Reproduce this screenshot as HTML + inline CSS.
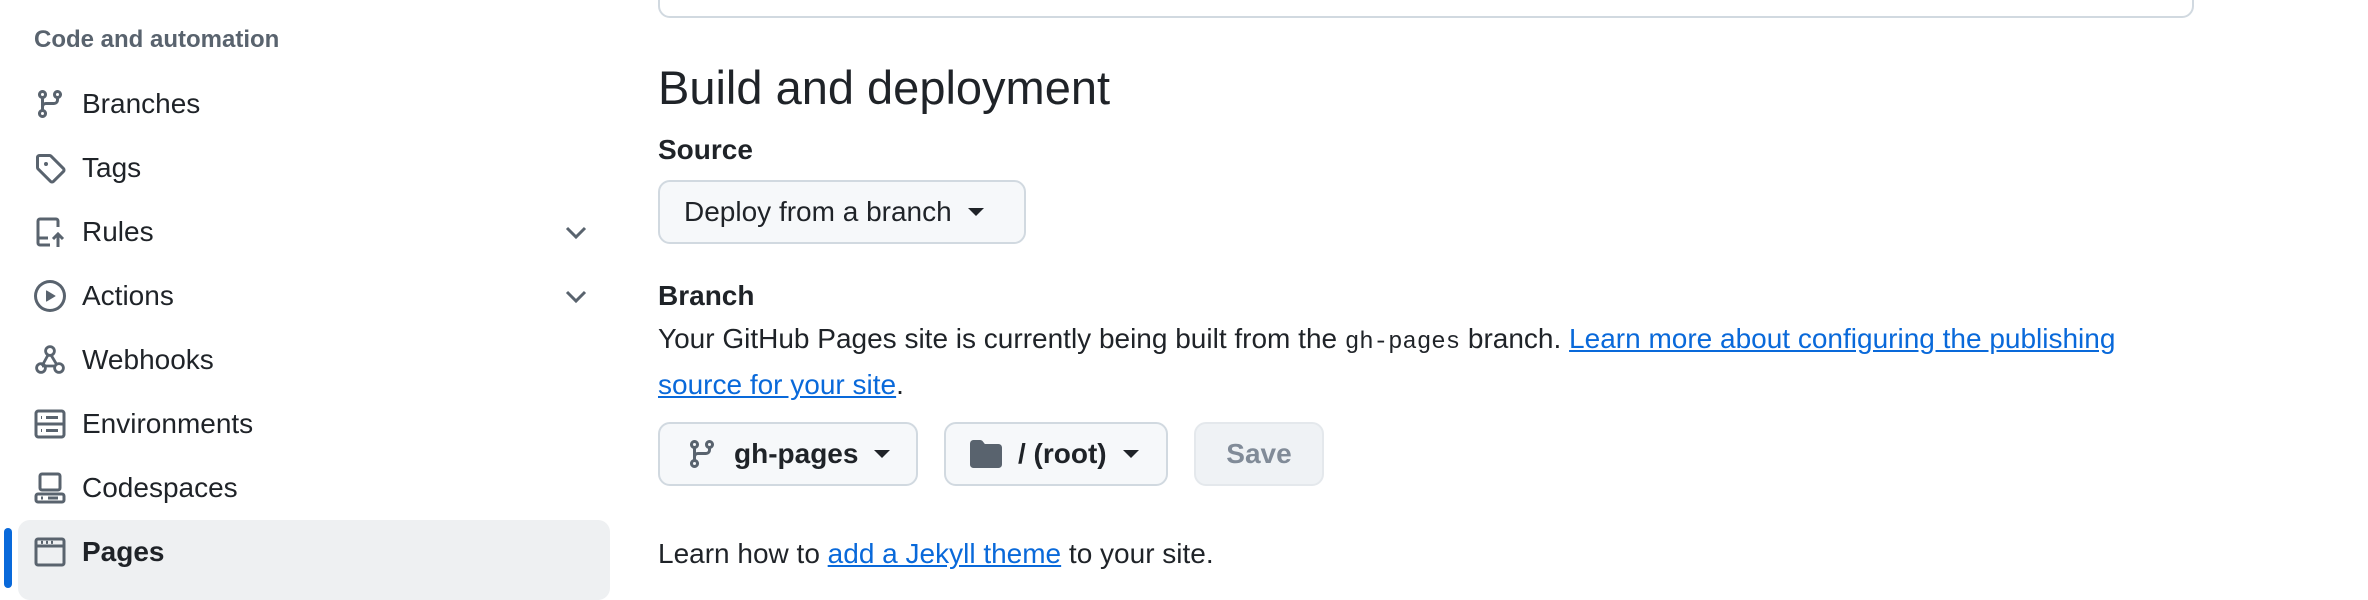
<!DOCTYPE html>
<html><head><meta charset="utf-8"><style>
html,body{margin:0;padding:0;background:#fff;}
body{width:2368px;height:578px;overflow:hidden;}
#w{zoom:2;width:1184px;height:289px;position:relative;font-family:"Liberation Sans",sans-serif;color:#1f2328;font-size:14px;}
.a{position:absolute;}
.h{left:17px;top:13px;font-size:12px;font-weight:bold;color:#59636e;}
.it{left:17px;height:20px;display:flex;align-items:center;white-space:nowrap;}
.it svg{width:16px;height:16px;fill:#59636e;margin-right:8px;}
.chev{left:280px;width:16px;height:16px;}
.btn{position:absolute;height:30px;border:1px solid #d1d9e0;border-radius:6px;background:#f6f8fa;display:flex;align-items:center;font-weight:bold;box-sizing:content-box;}
.car{width:0;height:0;border-left:4px solid transparent;border-right:4px solid transparent;border-top:4px solid #1f2328;margin-left:8px;}
a{color:#0969da;text-decoration:underline;}
code{font-family:"Liberation Mono",monospace;font-size:12px;}
</style></head><body><div id="w">
<div class="a h">Code and automation</div>

<div class="a it" style="top:42px"><svg viewBox="0 0 16 16"><path d="M9.5 3.25a2.25 2.25 0 1 1 3 2.122V6A2.5 2.5 0 0 1 10 8.5H6a1 1 0 0 0-1 1v1.128a2.251 2.251 0 1 1-1.5 0V5.372a2.25 2.25 0 1 1 1.5 0v1.836A2.493 2.493 0 0 1 6 7h4a1 1 0 0 0 1-1v-.628A2.25 2.25 0 0 1 9.5 3.25Zm-6 0a.75.75 0 1 0 1.5 0 .75.75 0 0 0-1.5 0Zm8.25-.75a.75.75 0 1 0 0 1.5.75.75 0 0 0 0-1.5ZM4.25 12a.75.75 0 1 0 0 1.5.75.75 0 0 0 0-1.5Z"/></svg>Branches</div>
<div class="a it" style="top:74px"><svg viewBox="0 0 16 16"><path d="M1 7.775V2.75C1 1.784 1.784 1 2.750 1h5.025c.464 0 .91.184 1.238.513l6.25 6.25a1.75 1.75 0 0 1 0 2.474l-5.026 5.026a1.75 1.75 0 0 1-2.474 0l-6.25-6.25A1.752 1.752 0 0 1 1 7.775Zm1.5 0c0 .066.026.13.073.177l6.25 6.25a.25.25 0 0 0 .354 0l5.025-5.025a.25.25 0 0 0 0-.354l-6.25-6.25a.25.25 0 0 0-.177-.073H2.75a.25.25 0 0 0-.25.25ZM6 5a1 1 0 1 1 0 2 1 1 0 0 1 0-2Z"/></svg>Tags</div>
<div class="a it" style="top:106px"><svg viewBox="0 0 16 16" style="fill:none;stroke:#59636e;stroke-width:1.5"><path d="M8 14.5H3a1 1 0 0 1-1-1v-11a1 1 0 0 1 1-1h8a1 1 0 0 1 1 1v3M2 11h5M12 15.5V9m-2.5 2.5L12 9l2.5 2.5"/></svg>Rules</div>
<svg class="a chev" style="top:108px" viewBox="0 0 16 16"><path d="M3.5 6l4.5 4.5L12.5 6" fill="none" stroke="#59636e" stroke-width="1.5"/></svg>
<div class="a it" style="top:138px"><svg viewBox="0 0 16 16"><path d="M8 0a8 8 0 1 1 0 16A8 8 0 0 1 8 0ZM1.5 8a6.5 6.5 0 1 0 13 0 6.5 6.5 0 0 0-13 0Zm4.879-2.773 4.264 2.559a.25.25 0 0 1 0 .428l-4.264 2.559A.25.25 0 0 1 6 10.559V5.442a.25.25 0 0 1 .379-.215Z"/></svg>Actions</div>
<svg class="a chev" style="top:140px" viewBox="0 0 16 16"><path d="M3.5 6l4.5 4.5L12.5 6" fill="none" stroke="#59636e" stroke-width="1.5"/></svg>
<div class="a it" style="top:170px"><svg viewBox="0 0 16 16" style="fill:none;stroke:#59636e;stroke-width:1.4"><circle cx="8" cy="3.5" r="2.2"/><path d="M7 5.5 4 11M4 11H11M8.5 5.5l3 5"/><circle cx="3.5" cy="12" r="2.2"/><circle cx="12.5" cy="12" r="2.2"/></svg>Webhooks</div>
<div class="a it" style="top:202px"><svg viewBox="0 0 16 16" style="fill:none;stroke:#59636e;stroke-width:1.5"><rect x="1" y="1.5" width="14" height="13" rx="1.2"/><path d="M1 8h14M6 4.75h6M6 11.25h6M3.5 4.75h.5M3.5 11.25h.5"/></svg>Environments</div>
<div class="a it" style="top:234px"><svg viewBox="0 0 16 16" style="fill:none;stroke:#59636e;stroke-width:1.5"><rect x="3" y="1" width="10" height="8" rx="1"/><rect x="1" y="11" width="14" height="4" rx="1"/><path d="M3.5 13h1M7 13h5"/></svg>Codespaces</div>
<div class="a" style="left:9px;top:260px;width:296px;height:40px;background:#eef0f2;border-radius:6px;"></div>
<div class="a" style="left:2px;top:264px;width:4px;height:30px;background:#0969da;border-radius:3px;"></div>
<div class="a it" style="top:266px;font-weight:bold"><svg viewBox="0 0 16 16" style="fill:none;stroke:#59636e;stroke-width:1.5"><rect x="1" y="1.5" width="14" height="13" rx="1"/><path d="M1 5h14M3.5 3.2h1M6 3.2h1M8.5 3.2h1"/></svg>Pages</div>

<div class="a" style="left:329px;top:-10px;width:766px;height:17px;border:1px solid #d1d9e0;border-radius:6px;"></div>
<div class="a" style="left:329px;top:29px;font-size:23.5px;line-height:30px;">Build and deployment</div>
<div class="a" style="left:329px;top:67px;font-weight:bold;">Source</div>
<div class="btn" style="left:329px;top:90px;padding:0 12px 0 12px;width:158px;font-weight:normal;">Deploy from a branch<span class="car"></span></div>
<div class="a" style="left:329px;top:140px;font-weight:bold;">Branch</div>
<div class="a" style="left:329px;top:159px;width:770px;line-height:21px;">Your GitHub Pages site is currently being built from the <code>gh-pages</code> branch. <a>Learn more about configuring the publishing</a><br><a>source for your site</a>.</div>
<div class="btn" style="left:329px;top:211px;width:128px;padding-left:0;"><svg viewBox="0 0 16 16" style="width:16px;height:16px;fill:#59636e;margin:0 8px 0 13px"><path d="M9.5 3.25a2.25 2.25 0 1 1 3 2.122V6A2.5 2.5 0 0 1 10 8.5H6a1 1 0 0 0-1 1v1.128a2.251 2.251 0 1 1-1.5 0V5.372a2.25 2.25 0 1 1 1.5 0v1.836A2.493 2.493 0 0 1 6 7h4a1 1 0 0 0 1-1v-.628A2.25 2.25 0 0 1 9.5 3.25Zm-6 0a.75.75 0 1 0 1.5 0 .75.75 0 0 0-1.5 0Zm8.25-.75a.75.75 0 1 0 0 1.5.75.75 0 0 0 0-1.5ZM4.25 12a.75.75 0 1 0 0 1.5.75.75 0 0 0 0-1.5Z"/></svg>gh-pages<span class="car"></span></div>
<div class="btn" style="left:472px;top:211px;width:110px;"><svg viewBox="0 0 16 16" style="width:16px;height:16px;fill:#59636e;margin:0 8px 0 12px"><path d="M1.75 1A1.75 1.75 0 0 0 0 2.75v10.5C0 14.216.784 15 1.750 15h12.5A1.75 1.75 0 0 0 16 13.25v-8.5A1.75 1.75 0 0 0 14.25 3H7.5a.25.25 0 0 1-.2-.1l-.9-1.2C6.07 1.26 5.55 1 5 1H1.75Z"/></svg>/ (root)<span class="car"></span></div>
<div class="btn" style="left:597px;top:211px;width:63px;justify-content:center;background:#eff2f5;border-color:#e4e8ec;color:#818b98;">Save</div>
<div class="a" style="left:329px;top:269px;">Learn how to <a>add a Jekyll theme</a> to your site.</div>
</div></body></html>
